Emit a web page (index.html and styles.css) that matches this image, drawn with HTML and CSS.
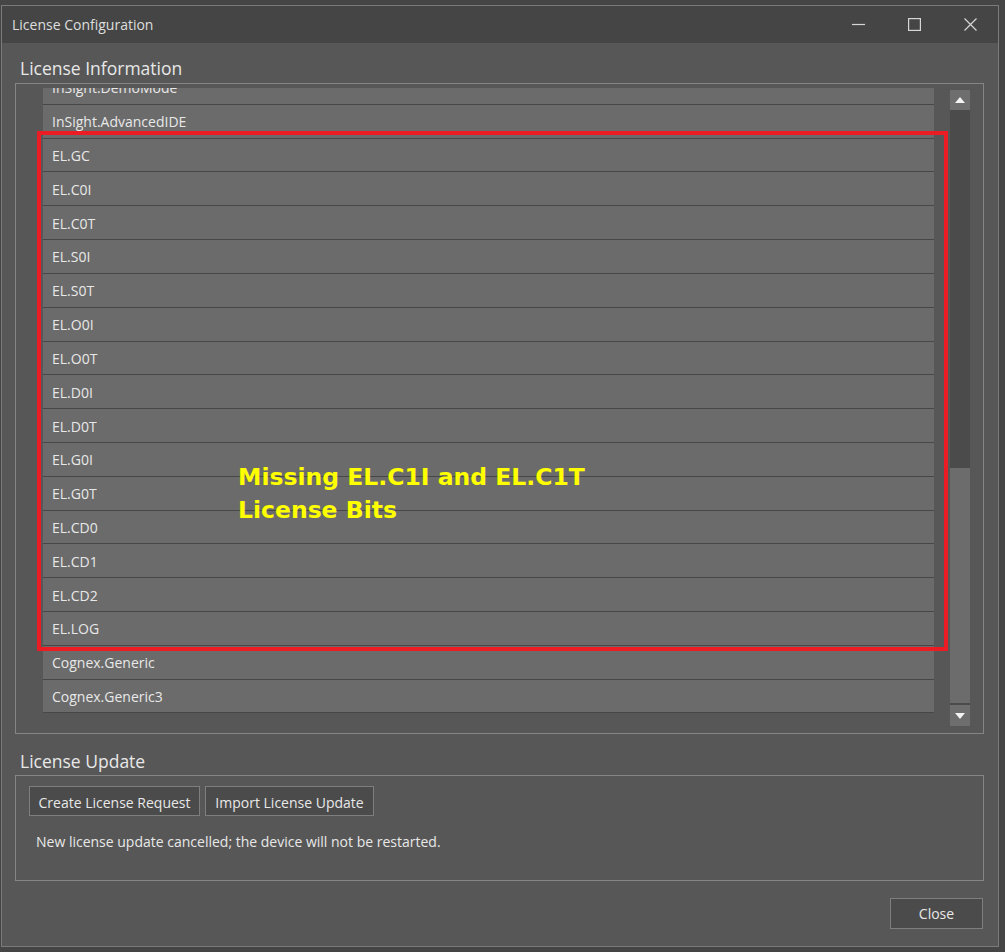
FILE: index.html
```html
<!DOCTYPE html>
<html lang="en">
<head>
<meta charset="utf-8">
<title>License Configuration</title>
<link rel="stylesheet" href="styles.css">
</head>
<body>
<div class="window">
  <div class="titlebar">
    <span class="title">License Configuration</span>
    <div class="caption-buttons">
      <span class="cap-btn"><svg width="13" height="13" viewBox="0 0 13 13"><path d="M0 6.5H13" stroke="#d6d6d6" stroke-width="1.2" fill="none"/></svg></span>
      <span class="cap-btn"><svg width="13" height="13" viewBox="0 0 13 13"><rect x="0.6" y="0.6" width="11.8" height="11.8" stroke="#d6d6d6" stroke-width="1.2" fill="none"/></svg></span>
      <span class="cap-btn"><svg width="13" height="13" viewBox="0 0 13 13"><path d="M0.5 0.5L12.5 12.5M12.5 0.5L0.5 12.5" stroke="#d6d6d6" stroke-width="1.2" fill="none"/></svg></span>
    </div>
  </div>
  <div class="content">
    <div class="group-header">License Information</div>
    <div class="group group-info">
      <div class="list">
        <div class="list-inner">
          <div class="row">InSight.DemoMode</div>
          <div class="row">InSight.AdvancedIDE</div>
          <div class="row">EL.GC</div>
          <div class="row">EL.C0I</div>
          <div class="row">EL.C0T</div>
          <div class="row">EL.S0I</div>
          <div class="row">EL.S0T</div>
          <div class="row">EL.O0I</div>
          <div class="row">EL.O0T</div>
          <div class="row">EL.D0I</div>
          <div class="row">EL.D0T</div>
          <div class="row">EL.G0I</div>
          <div class="row">EL.G0T</div>
          <div class="row">EL.CD0</div>
          <div class="row">EL.CD1</div>
          <div class="row">EL.CD2</div>
          <div class="row">EL.LOG</div>
          <div class="row">Cognex.Generic</div>
          <div class="row">Cognex.Generic3</div>
        </div>
      </div>
      <div class="scrollbar">
        <div class="sb-btn sb-up"><svg width="10" height="6" viewBox="0 0 10 6"><polygon points="5,0 10,6 0,6" fill="#f4f4f4"/></svg></div>
        <div class="sb-track">
          <div class="sb-space"></div>
          <div class="sb-thumb"></div>
        </div>
        <div class="sb-btn sb-down"><svg width="10" height="6" viewBox="0 0 10 6"><polygon points="0,0 10,0 5,6" fill="#f4f4f4"/></svg></div>
      </div>
      <div class="annot-box"></div>
      <div class="annot-text">Missing EL.C1I and EL.C1T<br>License Bits</div>
    </div>
    <div class="group-header second">License Update</div>
    <div class="group group-update">
      <div class="btn-row">
        <button class="btn btn-create">Create License Request</button>
        <button class="btn btn-import">Import License Update</button>
      </div>
      <p class="status">New license update cancelled; the device will not be restarted.</p>
    </div>
    <div class="footer">
      <button class="btn btn-close">Close</button>
    </div>
  </div>
</div>
</body>
</html>
```
FILE: styles.css
```css
* { box-sizing: border-box; }

html, body {
  margin: 0;
  padding: 0;
}

body {
  background: #454545;
  width: 1005px;
  height: 952px;
  overflow: hidden;
  font-family: "Open Sans", "Noto Sans", sans-serif;
  font-size: 14px;
  color: #e6e6e6;
}

.window {
  margin: 5px 0 0 1px;
  width: 998px;
  height: 942px;
  border: 1px solid #7a7a7a;
  background: #575757;
  display: flex;
  flex-direction: column;
}

.titlebar {
  height: 37px;
  flex: 0 0 37px;
  background: #454545;
  display: flex;
  align-items: center;
  justify-content: space-between;
}

.title {
  padding-left: 10px;
  font-size: 14px;
  color: #dedede;
  line-height: 20px;
}

.caption-buttons {
  display: flex;
  height: 100%;
}

.cap-btn {
  width: 56px;
  height: 100%;
  display: flex;
  align-items: center;
  justify-content: center;
}

.cap-btn svg { display: block; }

.content {
  flex: 1;
  display: flex;
  flex-direction: column;
  padding: 0 14px 0 13px;
}

.group-header {
  padding: 14px 0 3px 5px;
  font-size: 17.5px;
  line-height: 23px;
  color: #e8e8e8;
}

.group-header.second {
  padding-top: 16px;
  padding-bottom: 2px;
}

.group {
  border: 1px solid #858585;
  position: relative;
}

.group-info {
  height: 651px;
  display: flex;
  align-items: flex-start;
  padding-left: 27px;
  gap: 16px;
}

.list {
  margin-top: 4px;
  width: 891px;
  height: 625px;
  overflow: hidden;
}

.list-inner {
  margin-top: -17px;
}

.row {
  height: 33.82px;
  background: #6b6b6b;
  border-bottom: 1px solid #474747;
  padding: 2px 0 0 9px;
  display: flex;
  align-items: center;
  color: #e8e8e8;
  line-height: 20px;
}

.scrollbar {
  margin-top: 6px;
  width: 20px;
  height: 636px;
  display: flex;
  flex-direction: column;
}

.sb-btn {
  display: flex;
  align-items: center;
  justify-content: center;
  background: #6e6e6e;
}

.sb-btn svg { display: block; }

.sb-up { height: 20px; }
.sb-down { height: 21px; }

.sb-track {
  flex: 1;
  background: #4b4b4b;
  display: flex;
  flex-direction: column;
  padding-bottom: 2px;
}

.sb-space { height: 358px; }

.sb-thumb {
  flex: 1;
  background: #6c6c6c;
}

.annot-box {
  position: absolute;
  left: 21px;
  top: 47px;
  width: 911px;
  height: 520px;
  border: 4.5px solid #ec1c24;
  pointer-events: none;
}

.annot-text {
  position: absolute;
  left: 222px;
  top: 377px;
  font-family: "DejaVu Sans", sans-serif;
  font-weight: bold;
  font-size: 23.5px;
  line-height: 33px;
  color: #ffff00;
  white-space: nowrap;
}

.group-update {
  height: 106px;
  padding: 10px 0 0 13px;
}

.btn-row {
  display: flex;
  gap: 5px;
}

.btn {
  font-family: "Open Sans", "Noto Sans", sans-serif;
  font-size: 14px;
  color: #e8e8e8;
  background: #4b4b4b;
  border: 1px solid #7e7e7e;
  height: 30px;
  padding: 0;
  line-height: 20px;
  display: flex;
  align-items: center;
  justify-content: center;
}

.btn-create, .btn-import { padding-top: 3px; }
.btn-create { width: 171px; }
.btn-import { width: 169px; }

.status {
  margin: 16px 0 0 7px;
  line-height: 20px;
  color: #e8e8e8;
}

.footer {
  display: flex;
  justify-content: flex-end;
  padding-top: 17px;
}

.btn-close {
  width: 93px;
  height: 31px;
  margin-right: 1px;
}
```
